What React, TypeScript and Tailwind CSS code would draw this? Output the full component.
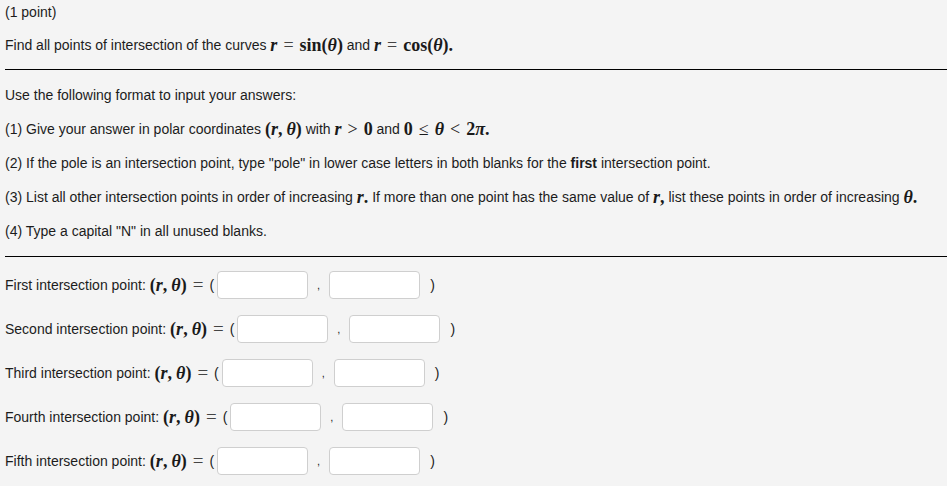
import React from 'react'

const mathFont = { fontFamily: '"Liberation Serif", "DejaVu Serif", serif' }

const M = ({ children }: { children: React.ReactNode }) => (
  <span className="text-[18px] font-bold text-[#1a1a1a]" style={mathFont}>
    {children}
  </span>
)

const I = ({ children }: { children: React.ReactNode }) => <i className="italic">{children}</i>

const Pair = () => (
  <M>
    (<I>r</I>,<span className="ml-[4px]" />
    <I>θ</I>)
  </M>
)

const Eq = () => (
  <span className="mx-[6px] text-[19px] text-[#444]" style={mathFont}>
    =
  </span>
)

const Box = () => (
  <input
    type="text"
    className="h-[28px] w-[91px] rounded-[4px] border border-[#cfcfcf] bg-white px-1 outline-none"
  />
)

const Row = ({ label }: { label: string }) => (
  <div className="flex h-[44px] items-center">
    <span>{label}</span>
    <span className="ml-[4px]">
      <Pair />
    </span>
    <Eq />
    <span>(</span>
    <span className="ml-[3px]">
      <Box />
    </span>
    <span className="mx-[9px] text-[11px]">,</span>
    <Box />
    <span className="ml-[10px]">)</span>
  </div>
)

const Line = ({ children }: { children: React.ReactNode }) => (
  <div className="flex h-[34px] items-center whitespace-nowrap">{children}</div>
)

export default function App() {
  return (
    <div
      className="min-h-[486px] w-full bg-[#f4f4f4] pl-[5px] text-[14px] text-[#1c1c1c]"
      style={{ fontFamily: '"Liberation Sans", Arial, sans-serif' }}
    >
      <div className="flex h-[24px] items-center">(1 point)</div>
      <div className="flex h-[42px] items-center whitespace-nowrap">
        Find all points of intersection of the curves&nbsp;
        <M>
          <I>r</I>
          <span className="mx-[6px] font-normal text-[#444]">=</span>sin(<I>θ</I>)
        </M>
        &nbsp;and&nbsp;
        <M>
          <I>r</I>
          <span className="mx-[6px] font-normal text-[#444]">=</span>cos(<I>θ</I>).
        </M>
      </div>
      <div className="mt-[3px] h-px bg-black" />

      <div className="mt-[8px]">
        <Line>Use the following format to input your answers:</Line>
        <Line>
          (1) Give your answer in polar coordinates&nbsp;
          <Pair />
          &nbsp;with&nbsp;
          <M>
            <I>r</I>
            <span className="mx-[6px] font-normal">&gt;</span>0
          </M>
          &nbsp;and&nbsp;
          <M>
            0<span className="mx-[6px] font-normal">≤</span>
            <I>θ</I>
            <span className="mx-[6px] font-normal">&lt;</span>2<I>π</I>.
          </M>
        </Line>
        <Line>
          (2) If the pole is an intersection point, type "pole" in lower case letters in both blanks for the&nbsp;
          <b className="font-bold">first</b>&nbsp;intersection point.
        </Line>
        <Line>
          (3) List all other intersection points in order of increasing&nbsp;
          <M>
            <I>r</I>.
          </M>
          &nbsp;If more than one point has the same value of&nbsp;
          <M>
            <I>r</I>,
          </M>
          &nbsp;list these points in order of increasing&nbsp;
          <M>
            <I>θ</I>.
          </M>
        </Line>
        <Line>(4) Type a capital "N" in all unused blanks.</Line>
      </div>
      <div className="mt-[8px] h-px bg-black" />

      <div className="mt-[6px]">
        <Row label="First intersection point:" />
        <Row label="Second intersection point:" />
        <Row label="Third intersection point:" />
        <Row label="Fourth intersection point:" />
        <Row label="Fifth intersection point:" />
      </div>
    </div>
  )
}
